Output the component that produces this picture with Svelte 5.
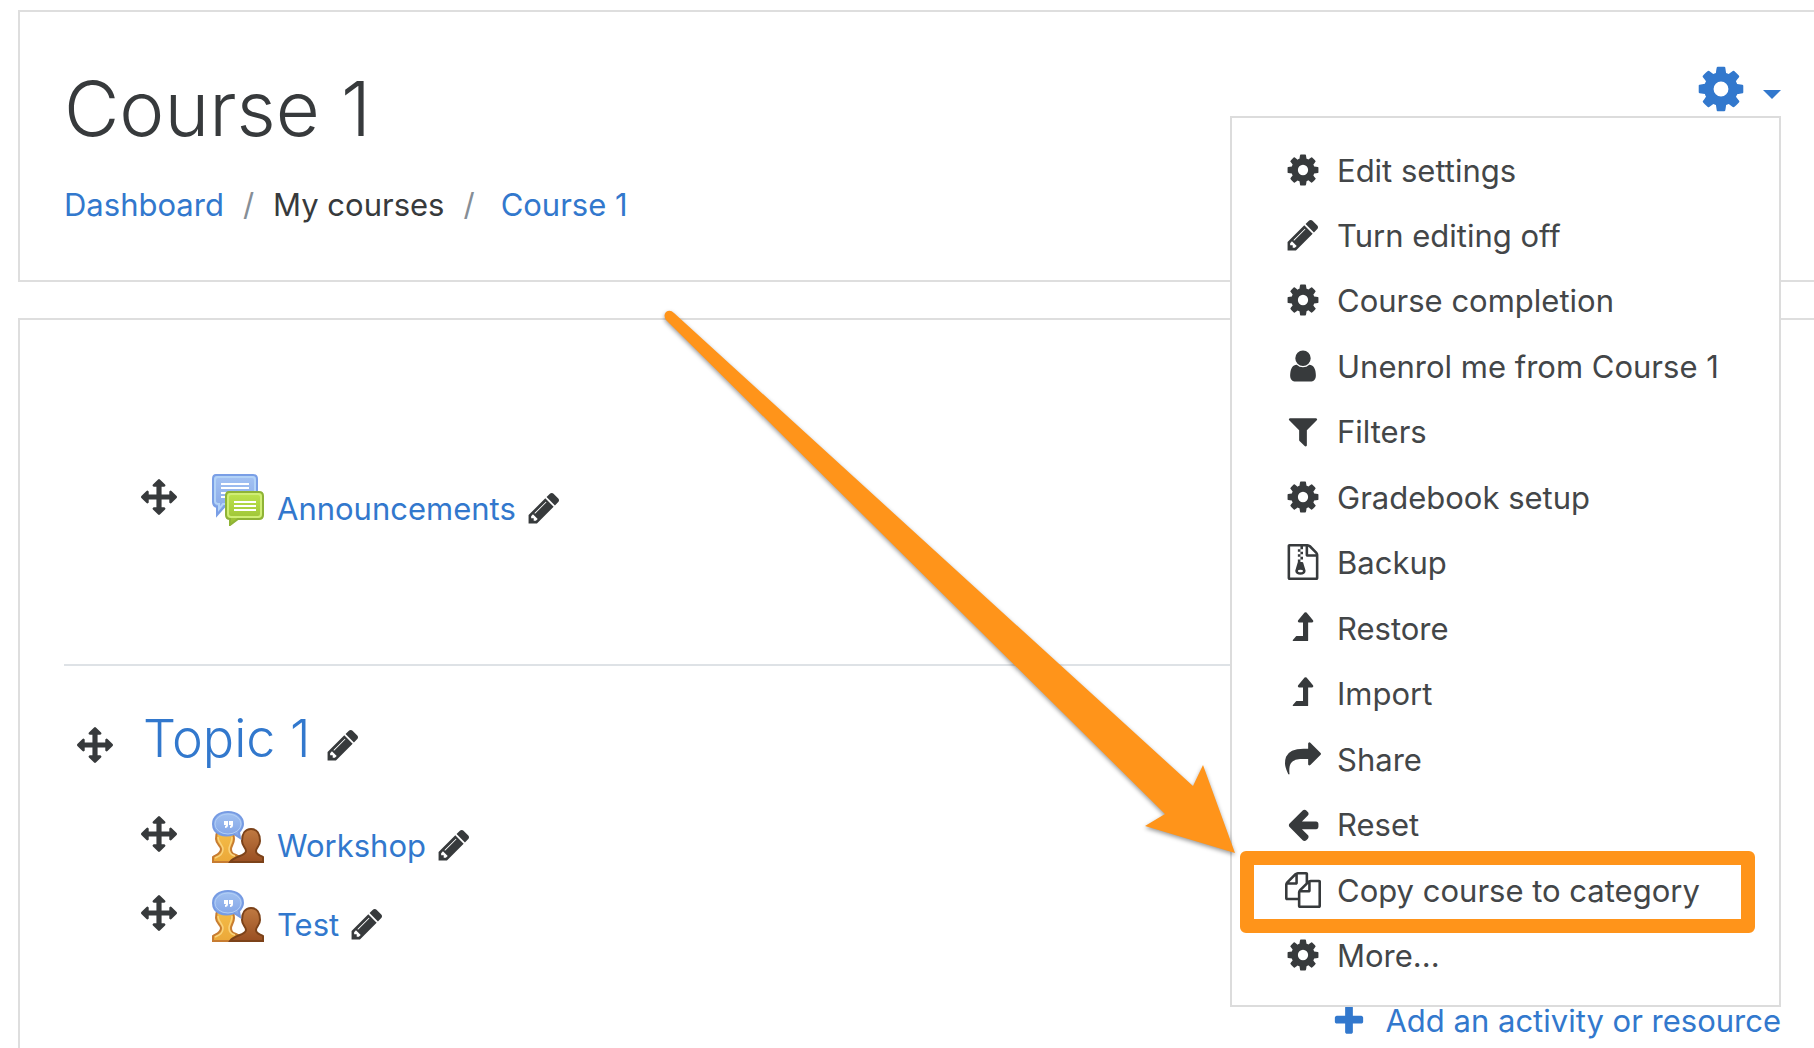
<script lang="ts">
  interface Activity {
    name: string;
    icon: 'forum' | 'workshop';
  }

  const icons = {
    cog: 'M1152 896q0-106-75-181t-181-75-181 75-75 181 75 181 181 75 181-75 75-181zm512-109v222q0 12-8 23t-20 13l-185 28q-19 54-39 91 35 50 107 138 10 12 10 25t-9 23q-27 37-99 108t-94 71q-12 0-26-9l-138-108q-44 23-91 38-16 136-29 186-7 28-36 28h-222q-14 0-24.5-8.5t-11.5-21.5l-28-184q-49-16-90-37l-141 107q-10 9-25 9-14 0-25-11-126-114-165-168-7-10-7-23 0-12 8-23 15-21 51-66.5t54-70.5q-27-50-41-99l-183-27q-13-2-21-12.5t-8-23.5v-222q0-12 8-23t19-13l186-28q14-46 39-92-40-57-107-138-10-12-10-24 0-10 9-23 26-36 98.5-107.5t94.5-71.5q13 0 26 10l138 107q44-23 91-38 16-136 29-186 7-28 36-28h222q14 0 24.5 8.5t11.5 21.5l28 184q49 16 90 37l142-107q9-9 24-9 13 0 25 10 129 119 165 170 7 8 7 22 0 12-8 23-15 21-51 66.5t-54 70.5q26 50 41 98l183 28q13 2 21 12.5t8 23.5z',
    pencil: 'M491 1536l91-91-235-235-91 91v107h128v128h107zm523-928q0-22-22-22-10 0-17 7l-542 542q-7 7-7 17 0 22 22 22 10 0 17-7l542-542q7-7 7-17zm-54-192l416 416-832 832h-416v-416zm683 96q0 53-37 90l-166 166-416-416 166-165q36-38 90-38 53 0 91 38l235 234q37 39 37 91z',
    user: 'M1536 1399q0 109-62.5 187t-150.5 78h-854q-88 0-150.5-78t-62.5-187q0-85 8.5-160.5t31.5-152 58.5-131 94-89 134.5-34.5q131 128 313 128t313-128q76 0 134.5 34.5t94 89 58.5 131 31.5 152 8.5 160.5zm-256-887q0 159-112.5 271.5t-271.5 112.5-271.5-112.5-112.5-271.5 112.5-271.5 271.5-112.5 271.5 112.5 112.5 271.5z',
    filter: 'M1595 295q17 41-14 70l-493 493v742q0 42-39 59-13 5-25 5-27 0-45-19l-256-256q-19-19-19-45v-486l-493-493q-31-29-14-70 17-39 59-39h1280q42 0 59 39z',
    archive: 'M768 384v-128h-128v128h128zm128 128v-128h-128v128h128zm-128 128v-128h-128v128h128zm128 128v-128h-128v128h128zm700-388q28 28 48 76t20 88v1152q0 40-28 68t-68 28h-1344q-40 0-68-28t-28-68v-1600q0-40 28-68t68-28h896q40 0 88 20t76 48zm-444-244v376h376q-10-29-22-41l-313-313q-12-12-41-22zm384 1528v-1024h-416q-40 0-68-28t-28-68v-416h-128v128h-128v-128h-512v1536h1280zm-627-721l107 349q8 27 8 52 0 83-72.5 137.5t-183.5 54.5-183.5-54.5-72.5-137.5q0-25 8-52 21-63 120-396v-128h128v128h79q22 0 39 13t23 34zm-141 465q53 0 90.5-19t37.5-45-37.5-45-90.5-19-90.5 19-37.5 45 37.5 45 90.5 19z',
    levelUp: 'M1402 582q-18 38-58 38h-192v896q0 14-9 23t-23 9h-704q-21 0-29-18-8-20 4-35l160-192q9-11 25-11h320v-672h-192q-40 0-58-38-17-37 9-68l320-384q18-22 49-22t49 22l320 384q27 32 9 68z',
    share: 'M1792 640q0 26-19 45l-512 512q-19 19-45 19t-45-19-19-45v-256h-224q-98 0-175.5 6t-154 21.5-133 42.5-105.5 69.5-80 101-48.5 138.5-17.5 181q0 55 5 123 0 6 2.5 23.5t2.5 26.5q0 15-8.5 25t-23.5 10q-16 0-28-17-7-9-13-22t-13.5-30-10.5-24q-127-285-127-451 0-199 53-333 162-403 875-403h224v-256q0-26 19-45t45-19 45 19l512 512q19 19 19 45z',
    back: 'M1664 896v128q0 53-32.5 90.5t-84.5 37.5h-704l293 294q38 36 38 90t-38 90l-75 76q-37 37-90 37-52 0-91-37l-651-652q-37-37-37-90 0-52 37-91l651-650q38-38 91-38 52 0 90 38l75 74q38 38 38 91t-38 91l-293 293h704q52 0 84.5 37.5t32.5 90.5z',
    copy: 'M1696 384q40 0 68 28t28 68v1216q0 40-28 68t-68 28h-960q-40 0-68-28t-28-68v-288h-544q-40 0-68-28t-28-68v-672q0-40 20-88t48-76l408-408q28-28 76-48t88-20h416q40 0 68 28t28 68v328q68-40 128-40h416zm-544 213l-299 299h299v-299zm-640-384l-299 299h299v-299zm196 647l316-316v-416h-384v416q0 40-28 68t-68 28h-416v640h512v-256q0-40 20-88t48-76zm956 804v-1152h-384v416q0 40-28 68t-68 28h-416v640h896z',
    move: 'M1792 896q0 26-19 45l-256 256q-19 19-45 19t-45-19-19-45v-128h-384v384h128q26 0 45 19t19 45-19 45l-256 256q-19 19-45 19t-45-19l-256-256q-19-19-19-45t19-45 45-19h128v-384h-384v128q0 26-19 45t-45 19-45-19l-256-256q-19-19-19-45t19-45l256-256q19-19 45-19t45 19 19 45v128h384v-384h-128q-26 0-45-19t-19-45 19-45l256-256q19-19 45-19t45 19l256 256q19 19 19 45t-19 45-45 19h-128v384h384v-128q0-26 19-45t45-19 45 19l256 256q19 19 19 45z',
    plus: 'M1600 736v192q0 40-28 68t-68 28h-416v416q0 40-28 68t-68 28h-192q-40 0-68-28t-28-68v-416h-416q-40 0-68-28t-28-68v-192q0-40 28-68t68-28h416v-416q0-40 28-68t68-28h192q40 0 68 28t28 68v416h416q40 0 68 28t28 68z'
  };

  type IconName = keyof typeof icons;

  const menuItems: { label: string; icon: IconName; highlight?: boolean }[] = [
    { label: 'Edit settings', icon: 'cog' },
    { label: 'Turn editing off', icon: 'pencil' },
    { label: 'Course completion', icon: 'cog' },
    { label: 'Unenrol me from Course 1', icon: 'user' },
    { label: 'Filters', icon: 'filter' },
    { label: 'Gradebook setup', icon: 'cog' },
    { label: 'Backup', icon: 'archive' },
    { label: 'Restore', icon: 'levelUp' },
    { label: 'Import', icon: 'levelUp' },
    { label: 'Share', icon: 'share' },
    { label: 'Reset', icon: 'back' },
    { label: 'Copy course to category', icon: 'copy', highlight: true },
    { label: 'More...', icon: 'cog' }
  ];

  const general: Activity[] = [{ name: 'Announcements', icon: 'forum' }];
  const topic: Activity[] = [
    { name: 'Workshop', icon: 'workshop' },
    { name: 'Test', icon: 'workshop' }
  ];

  let menuOpen = $state(true);
</script>

{#snippet icon(name: IconName)}
  <svg class="icon" viewBox="0 0 1792 1792" aria-hidden="true"><path d={icons[name]} /></svg>
{/snippet}

{#snippet forumIcon()}
  <svg class="activity-icon" viewBox="0 0 52 52" aria-hidden="true">
    <defs>
      <linearGradient id="forum-blue" x1="0" y1="0" x2="0" y2="1">
        <stop offset="0" stop-color="#a4c3f3" />
        <stop offset="1" stop-color="#84a5e6" />
      </linearGradient>
      <linearGradient id="forum-green" x1="0" y1="0" x2="0" y2="1">
        <stop offset="0" stop-color="#bfe54e" />
        <stop offset="1" stop-color="#97bd32" />
      </linearGradient>
    </defs>
    <path d="M4 1h37q4 0 4 4v23q0 4-4 4H13L5 41V33Q1 32 1 28V5q0-4 3-4z" fill="url(#forum-blue)" stroke="#7a9fe6" stroke-width="2" />
    <path d="M6 3h34q3 0 3 3v21q0 3-3 3H11l-4 5v-5q-4 0-4-3V6q0-3 3-3z" fill="none" stroke="#b3d3f7" stroke-width="2" />
    <path d="M9 10h28M9 14h28M9 19h28M9 23h28" stroke="#fff" stroke-width="2" />
    <path d="M17 18h30q4 0 4 4v19q0 4-4 4H26l-8 6v-6q-4 0-4-4V22q0-4 3-4z" fill="url(#forum-green)" stroke="#8fb336" stroke-width="2" />
    <path d="M19 20h27q3 0 3 3v17q0 3-3 3H19q-3 0-3-3V23q0-3 3-3z" fill="none" stroke="#d0ee75" stroke-width="2" />
    <path d="M22 28h22M22 32h22M22 36h22" stroke="#fff" stroke-width="2" />
  </svg>
{/snippet}

{#snippet workshopIcon()}
  <svg class="activity-icon" viewBox="0 0 52 52" aria-hidden="true">
    <defs>
      <linearGradient id="person-light" x1="0" y1="0" x2="0" y2="1">
        <stop offset="0" stop-color="#f6c04a" />
        <stop offset="1" stop-color="#eba839" />
      </linearGradient>
      <linearGradient id="person-dark" x1="0" y1="0" x2="0" y2="1">
        <stop offset="0" stop-color="#c07a42" />
        <stop offset="1" stop-color="#994f22" />
      </linearGradient>
      <linearGradient id="bubble" x1="0" y1="0" x2="0" y2="1">
        <stop offset="0" stop-color="#a2c2f1" />
        <stop offset="1" stop-color="#81a3e6" />
      </linearGradient>
    </defs>
    <path d="M13 16c6 0 9 5 9 12 0 5-3 7-3 10 0 4 2 5 5 6l6 3v4H1v-5c3-2 8-3 8-8 0-3-5-5-5-10 0-7 3-12 9-12z" fill="url(#person-light)" stroke="#c77c31" stroke-width="2" />
    <path d="M6 26c0 6 5 8 5 12 0 6-4 7-8 9M20 26c0 6-3 8-3 12 0 4 2 6 6 7" fill="none" stroke="#f9d27c" stroke-width="1.5" />
    <path d="M39 18c6 0 9 5 9 12 0 5-4 7-4 10 0 4 4 4 7 6v5H18c4-6 16-6 16-11 0-3-4-5-4-10 0-7 3-12 9-12z" fill="url(#person-dark)" stroke="#7c4219" stroke-width="2" />
    <path d="M16 1c9 0 15 5 15 12 0 4-2 6-4 8l1 6-6-4C12 27 1 23 1 13 1 6 7 1 16 1z" fill="url(#bubble)" stroke="#769be3" stroke-width="2" />
    <ellipse cx="16" cy="13" rx="13" ry="10" fill="none" stroke="#b0cdf5" />
    <path d="M12 10h4v4q0 3-3 3v-2q1 0 1-1h-2zM17 10h4v4q0 3-3 3v-2q1 0 1-1h-2z" fill="#fff" />
  </svg>
{/snippet}

{#snippet activityList(items: Activity[])}
  <ul class="activities">
    {#each items as item}
      <li class="activity">
        <button class="tool move" aria-label="Move {item.name}">{@render icon('move')}</button>
        {#if item.icon === 'forum'}
          {@render forumIcon()}
        {:else}
          {@render workshopIcon()}
        {/if}
        <a class="activity-name" href="#activity">{item.name}</a>
        <button class="tool" aria-label="Edit title of {item.name}">{@render icon('pencil')}</button>
      </li>
    {/each}
  </ul>
{/snippet}

<div class="page">
  <header class="card page-header">
    <div>
      <h1>Course 1</h1>
      <nav aria-label="Breadcrumb">
        <ol class="breadcrumb">
          <li><a href="#dashboard">Dashboard</a></li>
          <li>My courses</li>
          <li><a href="#course">Course 1</a></li>
        </ol>
      </nav>
    </div>

    <div class="actions">
      <button
        class="menu-toggle"
        aria-label="Actions menu"
        aria-expanded={menuOpen}
        onclick={() => (menuOpen = !menuOpen)}
      >
        {@render icon('cog')}
        <span class="caret"></span>
      </button>

      {#if menuOpen}
        <ul class="menu">
          {#each menuItems as item}
            <li class:highlight={item.highlight}>
              <a href="#action">{@render icon(item.icon)}{item.label}</a>
            </li>
          {/each}
        </ul>
        <!-- Pointer to the highlighted entry -->
        <svg class="pointer" viewBox="0 0 580 550" aria-hidden="true">
          <path d="M14 10L533 483L543 462L575 550L485 523L505 511L6 17Q3 12 6 9Q10 6 14 10z" />
        </svg>
      {/if}
    </div>
  </header>

  <main class="card content">
    <section class="general">
      {@render activityList(general)}
    </section>

    <section class="topic">
      <div class="topic-head">
        <button class="tool" aria-label="Move Topic 1">{@render icon('move')}</button>
        <h2><a href="#topic">Topic 1</a></h2>
        <button class="tool" aria-label="Edit topic name">{@render icon('pencil')}</button>
      </div>
      {@render activityList(topic)}
      <a class="add" href="#add">{@render icon('plus')}Add an activity or resource</a>
    </section>
  </main>
</div>

<style>
  :global(body) {
    background: #fff;
  }

  .page {
    display: flex;
    flex-direction: column;
    gap: 36px;
    box-sizing: border-box;
    min-height: 100vh;
    padding: 10px 0 0 18px;
    color: #373a3c;
    font: 400 31px/48px Inter, "Liberation Sans", sans-serif;
  }

  a {
    color: #3278cd;
    text-decoration: none;
  }

  ul,
  ol {
    margin: 0;
    padding: 0;
    list-style: none;
  }

  button {
    border: 0;
    padding: 0;
    background: none;
    color: inherit;
    font: inherit;
    cursor: pointer;
  }

  .icon {
    display: block;
    flex: none;
    width: 36px;
    height: 36px;
    fill: currentColor;
  }

  .card {
    border: 2px solid #dedede;
    border-right: 0;
    padding: 0 33px 0 44px;
  }

  .page-header {
    display: flex;
    justify-content: space-between;
    padding-top: 48px;
    padding-bottom: 49px;
  }

  h1 {
    margin: 0 0 23px;
    font-size: 76px;
    font-weight: 300;
    line-height: 96px;
  }

  .breadcrumb {
    display: flex;
    line-height: 52px;
  }

  .breadcrumb li + li::before {
    content: '/';
    padding: 0 19px;
    color: #868e96;
  }

  .breadcrumb li:last-child a {
    padding-left: 7px;
  }

  .actions {
    position: relative;
  }

  .menu-toggle {
    display: flex;
    align-items: center;
    gap: 16px;
    padding-top: 3px;
    color: #3278cd;
  }

  .menu-toggle .icon {
    width: 52px;
    height: 52px;
  }

  .caret {
    margin-top: 10px;
    border: 9px solid transparent;
    border-top-color: currentColor;
    border-bottom: 0;
  }

  .menu {
    position: absolute;
    z-index: 1;
    top: 56px;
    right: 0;
    box-sizing: border-box;
    width: 551px;
    padding: 20px 8px 16px;
    border: 2px solid #dcdcdc;
    background: #fff;
  }

  .menu li {
    position: relative;
  }

  .menu a {
    display: flex;
    align-items: center;
    gap: 16px;
    padding-left: 45px;
    color: #434648;
    line-height: 65px;
    white-space: nowrap;
  }

  .menu li:nth-child(odd) a {
    line-height: 66px;
  }

  .menu li:first-child a {
    line-height: 65px;
  }

  .menu .icon {
    margin-bottom: 2px;
    fill: #373a3c;
  }

  .menu .highlight::after {
    content: '';
    position: absolute;
    inset: -7px 16px -10px 0;
    border: 14px solid #ff941a;
    border-radius: 6px;
    pointer-events: none;
  }

  .pointer {
    position: absolute;
    z-index: 2;
    top: 243px;
    right: 541px;
    width: 580px;
    height: 550px;
    fill: #ff941a;
    filter: drop-shadow(0 2px 2px rgb(0 0 0 / 40%));
    overflow: visible;
    pointer-events: none;
  }

  .content {
    flex: 1;
    border-bottom: 0;
  }

  .general {
    padding: 142px 0 136px;
    border-bottom: 2px solid #dee2e6;
  }

  .activities {
    display: grid;
    gap: 13px;
    padding-left: 77px;
  }

  .activity {
    display: flex;
    align-items: flex-start;
    height: 66px;
  }

  .move {
    margin: 17px 35px 0 0;
  }

  .activity-icon {
    flex: none;
    width: 52px;
    height: 52px;
    margin-top: 12px;
  }

  .activity-name {
    margin: 23px 10px 0 13px;
  }

  .activity-name + .tool {
    margin-top: 28px;
  }

  .topic-head {
    display: flex;
    padding: 39px 0 26px 13px;
  }

  .topic-head .tool {
    align-self: flex-end;
    margin-bottom: 10px;
  }

  h2 {
    margin: 0 15px 0 30px;
    font-size: 52px;
    font-weight: 300;
    line-height: 68px;
  }

  .add {
    display: flex;
    align-items: center;
    justify-content: flex-end;
    gap: 18px;
    margin-top: 53px;
  }
</style>
